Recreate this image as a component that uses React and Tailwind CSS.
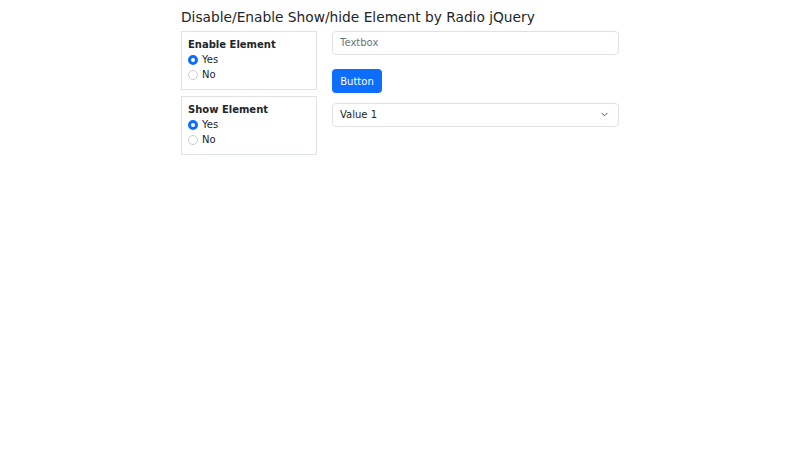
import { useState } from 'react'

const font = { fontFamily: '"DejaVu Sans", sans-serif' }

function Radio({ checked, label, onChange }) {
  return (
    <label className="flex h-[15px] items-center gap-[4px] text-[10px] leading-[15px] text-[#212529]">
      <span
        onClick={onChange}
        className={`inline-block h-[10px] w-[10px] rounded-full ${
          checked ? 'border-[3px] border-[#0d6efd] bg-white' : 'border border-[#c9ced4] bg-white'
        }`}
      />
      {label}
    </label>
  )
}

function RadioBox({ title, value, onChange }) {
  return (
    <div className="h-[59px] w-[136px] border border-[#dee2e6] px-[6px] pt-[5px]">
      <div className="text-[10px] font-bold leading-[15px] text-[#212529]">{title}</div>
      <Radio checked={value} label="Yes" onChange={() => onChange(true)} />
      <Radio checked={!value} label="No" onChange={() => onChange(false)} />
    </div>
  )
}

export default function App() {
  const [enabled, setEnabled] = useState(true)
  const [shown, setShown] = useState(true)

  return (
    <div className="h-[450px] w-[800px] bg-white" style={font}>
      <div className="ml-[181px] w-[438px] pt-[8px]">
        <h5 className="text-[13.75px] leading-[18px] text-[#212529]">
          Disable/Enable Show/hide Element by Radio jQuery
        </h5>
        <div className="mt-[5px] flex gap-[15px]">
          <div className="flex flex-col gap-[6px]">
            <RadioBox title="Enable Element" value={enabled} onChange={setEnabled} />
            <RadioBox title="Show Element" value={shown} onChange={setShown} />
          </div>
          {shown && (
            <div className="flex flex-1 flex-col">
              <input
                disabled={!enabled}
                placeholder="Textbox"
                className="h-[24px] w-full rounded-[4px] border border-[#dee2e6] bg-white px-[7px] pb-[2px] text-[10px] text-[#212529] placeholder:text-[#6c757d] outline-none"
              />
              <button
                disabled={!enabled}
                className="mt-[14px] h-[24px] w-[50px] rounded-[4px] bg-[#0d6efd] text-[10px] text-white"
              >
                Button
              </button>
              <div className="mt-[10px] flex h-[24px] w-full items-center justify-between rounded-[4px] border border-[#dee2e6] pb-[1px] pl-[7px] pr-[9px] text-[10px] text-[#212529]">
                <span>Value 1</span>
                <svg width="9" height="7" viewBox="0 0 16 16" fill="none">
                  <path d="M2 5l6 6 6-6" stroke="#343a40" strokeWidth="2" strokeLinecap="round" strokeLinejoin="round" />
                </svg>
              </div>
            </div>
          )}
        </div>
      </div>
    </div>
  )
}
